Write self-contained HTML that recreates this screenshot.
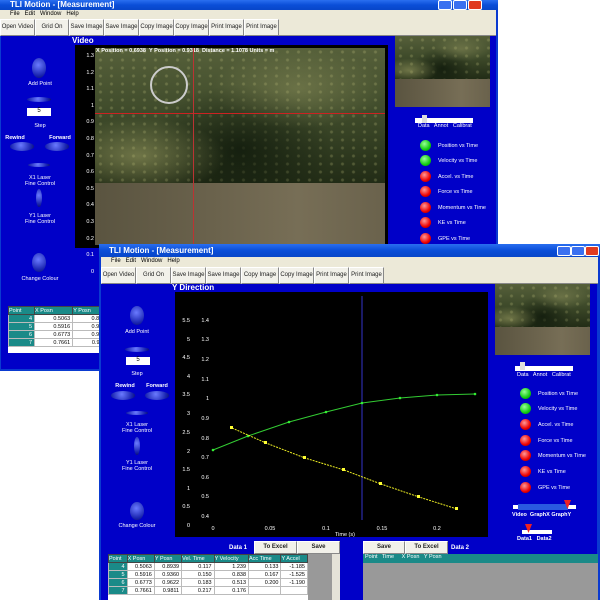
<!DOCTYPE html>
<html><head><style>
*{margin:0;padding:0;box-sizing:border-box}
body{width:600px;height:600px;background:#fff;position:relative;overflow:hidden;font-family:"Liberation Sans",sans-serif;font-size:6px}
.a{position:absolute}
.tb{background:linear-gradient(#2a6ff0,#0a4ed8 50%,#0846c8);color:#fff;font-weight:bold;font-size:8px;padding-left:10px;line-height:11px}
.menu{background:#ece9d8;font-size:6px;line-height:8px;padding-left:10px}
.tool{background:#ece9d8;border-bottom:1px solid #888}
.btn{position:absolute;top:1px;height:17px;border:1px solid #888;border-top-color:#fff;border-left-color:#fff;background:#f2f1ea;font-size:6px;text-align:center;line-height:15px;color:#222}
.blue{background:#0000c8}
.w{color:#fff;text-align:center;font-size:5.5px}
.ov{position:absolute;border-radius:50%;background:radial-gradient(circle at 45% 35%,#6a7aff,#1a25b0 70%,#0a1070);}
.ball{position:absolute;width:11px;height:11px;border-radius:50%}
.g{background:radial-gradient(circle at 40% 35%,#9f9,#1c1 60%,#070)}
.r{background:radial-gradient(circle at 40% 35%,#f99,#e00 60%,#700)}
.lbl{position:absolute;color:#fff;font-size:5.5px}
.fol{background:
 radial-gradient(ellipse at 15% 80%,rgba(190,190,120,.45),transparent 25%),
 radial-gradient(ellipse at 70% 30%,rgba(170,170,110,.35),transparent 30%),
 radial-gradient(ellipse at 50% 75%,rgba(10,20,8,.7),transparent 45%),
 radial-gradient(circle,rgba(200,200,130,.25) 1px,transparent 2px) 0 0/11px 8px,
 linear-gradient(#56603a,#3e4a2a 50%,#222c16)}
.wat{background:linear-gradient(90deg,#5a5440,#6a624c 40%,#776e56 70%,#6a624c)}
.wb{position:absolute;width:14px;height:10px;border:1px solid #fff;border-radius:2px;background:#3a70f0}
table{border-collapse:collapse;font-size:5.5px}
td{border:1px solid #bbb;height:8px;text-align:right;padding-right:2px;background:#fff}
th{background:#1a8a88;color:#fff;font-weight:normal;border:1px solid #444;height:8px;text-align:left}
td.h{background:#1a8a88;color:#fff}
</style></head><body>

<!-- BACK WINDOW -->
<div class="a" style="left:0;top:0;width:498px;height:371px;background:#0a3ad0"></div>
<div class="a tb" style="left:0;top:0;width:498px;height:10px;line-height:10px">TLI Motion - [Measurement]</div>
<div class="a wb" style="left:468px;top:0;background:#e03a20"></div>
<div class="a wb" style="left:453px;top:0"></div><div class="a wb" style="left:438px;top:0"></div>
<div class="a menu" style="left:0;top:10px;width:496px;height:8px">File &nbsp; Edit &nbsp; Window &nbsp; Help</div>
<div class="a tool" style="left:0;top:18px;width:496px;height:18px">
<div class="btn" style="left:0;width:35px">Open Video</div><div class="btn" style="left:35px;width:34px">Grid On</div>
<div class="btn" style="left:69px;width:35px">Save Image</div><div class="btn" style="left:104px;width:35px">Save Image</div>
<div class="btn" style="left:139px;width:35px">Copy Image</div><div class="btn" style="left:174px;width:35px">Copy Image</div>
<div class="btn" style="left:209px;width:35px">Print Image</div><div class="btn" style="left:244px;width:35px">Print Image</div>
</div>
<div class="a blue" style="left:1px;top:36px;width:495px;height:333px"></div>
<div class="a" style="left:72px;top:36px;color:#fff;font-weight:bold;font-size:8px">Video</div>
<div class="a" style="left:75px;top:45px;width:313px;height:203px;background:#000"></div>
<div class="a fol" style="left:95px;top:48px;width:290px;height:135px"></div>
<div class="a wat" style="left:95px;top:183px;width:290px;height:62px"></div>
<div class="a" style="left:96px;top:48px;color:#fff;font-size:5.5px;font-weight:bold">X Position = 0.6938 &nbsp;Y Position = 0.9318 &nbsp;Distance = 1.1078 Units = m</div>
<div class="a" style="left:95px;top:113px;width:290px;height:1px;background:#c22"></div>
<div class="a" style="left:193px;top:48px;width:1px;height:197px;background:#b33"></div>
<div class="a" style="left:150px;top:66px;width:38px;height:38px;border:2px solid #ccc;border-radius:50%"></div>
<div class="a" style="left:80px;top:48px;color:#fff;font-size:5.5px;line-height:16.6px;width:14px;text-align:right">1.3<br>1.2<br>1.1<br>1<br>0.9<br>0.8<br>0.7<br>0.6<br>0.5<br>0.4<br>0.3<br>0.2<br>0.1<br>0</div>
<!-- back left controls -->
<div class="ov" style="left:32px;top:58px;width:14px;height:20px"></div>
<div class="a w" style="left:15px;top:81px;width:50px">Add Point</div>
<div class="ov" style="left:27px;top:97px;width:24px;height:5px"></div>
<div class="a" style="left:27px;top:108px;width:24px;height:8px;background:#fff;font-size:6px;text-align:center">5</div>
<div class="a w" style="left:15px;top:123px;width:50px">Step</div>
<div class="a w" style="left:0;top:135px;width:30px;font-weight:bold">Rewind</div><div class="a w" style="left:45px;top:135px;width:30px;font-weight:bold">Forward</div>
<div class="ov" style="left:10px;top:142px;width:24px;height:9px"></div><div class="ov" style="left:45px;top:142px;width:24px;height:9px"></div>
<div class="ov" style="left:28px;top:163px;width:22px;height:4px"></div>
<div class="a w" style="left:15px;top:175px;width:50px">X1 Laser<br>Fine Control</div>
<div class="ov" style="left:36px;top:189px;width:6px;height:18px"></div>
<div class="a w" style="left:15px;top:213px;width:50px">Y1 Laser<br>Fine Control</div>
<div class="ov" style="left:32px;top:253px;width:14px;height:19px"></div>
<div class="a w" style="left:10px;top:276px;width:60px">Change Colour</div>
<div class="a" style="left:8px;top:306px;width:92px;height:47px;background:#fff;overflow:hidden">
<table style="width:120px"><tr><th>Point</th><th>X Posn</th><th>Y Posn</th><th>Vel</th></tr>
<tr><td class="h">4</td><td>0.5063</td><td>0.8939</td><td></td></tr><tr><td class="h">5</td><td>0.5916</td><td>0.9360</td><td></td></tr>
<tr><td class="h">6</td><td>0.6773</td><td>0.9622</td><td></td></tr><tr><td class="h">7</td><td>0.7661</td><td>0.9811</td><td></td></tr></table></div>
<!-- back right -->
<div class="a fol" style="left:395px;top:36px;width:95px;height:43px"></div>
<div class="a wat" style="left:395px;top:79px;width:95px;height:28px"></div>
<div class="a" style="left:415px;top:118px;width:58px;height:5px;background:#fff"></div>
<div class="a" style="left:422px;top:115px;width:5px;height:8px;background:#ddd"></div>
<div class="lbl" style="left:418px;top:123px">Data &nbsp; Annot &nbsp; Calibrat</div>
<div class="ball g" style="left:420px;top:140px"></div><div class="lbl" style="left:438px;top:143px">Position vs Time</div>
<div class="ball g" style="left:420px;top:155px"></div><div class="lbl" style="left:438px;top:158px">Velocity vs Time</div>
<div class="ball r" style="left:420px;top:171px"></div><div class="lbl" style="left:438px;top:174px">Accel. vs Time</div>
<div class="ball r" style="left:420px;top:186px"></div><div class="lbl" style="left:438px;top:189px">Force vs Time</div>
<div class="ball r" style="left:420px;top:202px"></div><div class="lbl" style="left:438px;top:205px">Momentum vs Time</div>
<div class="ball r" style="left:420px;top:217px"></div><div class="lbl" style="left:438px;top:220px">KE vs Time</div>
<div class="ball r" style="left:420px;top:233px"></div><div class="lbl" style="left:438px;top:236px">GPE vs Time</div>

<!-- FRONT WINDOW -->
<div class="a" style="left:99px;top:244px;width:501px;height:356px;background:#0a3ad0"></div>
<div class="a tb" style="left:99px;top:244px;width:501px;height:13px;line-height:13px">TLI Motion - [Measurement]</div>
<div class="a wb" style="left:585px;top:246px;background:#e03a20"></div>
<div class="a wb" style="left:571px;top:246px"></div><div class="a wb" style="left:557px;top:246px"></div>
<div class="a menu" style="left:101px;top:257px;width:497px;height:9px">File &nbsp; Edit &nbsp; Window &nbsp; Help</div>
<div class="a tool" style="left:101px;top:266px;width:497px;height:18px">
<div class="btn" style="left:0;width:35px">Open Video</div><div class="btn" style="left:35px;width:35px">Grid On</div>
<div class="btn" style="left:70px;width:35px">Save Image</div><div class="btn" style="left:105px;width:35px">Save Image</div>
<div class="btn" style="left:140px;width:38px">Copy Image</div><div class="btn" style="left:178px;width:35px">Copy Image</div>
<div class="btn" style="left:213px;width:35px">Print Image</div><div class="btn" style="left:248px;width:35px">Print Image</div>
</div>
<div class="a blue" style="left:101px;top:284px;width:496px;height:316px"></div>
<div class="a" style="left:172px;top:283px;color:#fff;font-weight:bold;font-size:8px">Y Direction</div>
<svg class="a" style="left:175px;top:292px" width="313" height="245" viewBox="175 292 313 245">
<rect x="175" y="292" width="313" height="245" fill="#000"/>
<line x1="362" y1="296" x2="362" y2="520" stroke="#33c" stroke-width="1"/>
<polyline points="213,450 248,436 289,422 326,412 362,403 400,398 437,395 475,394" fill="none" stroke="#3c3" stroke-width="1"/>
<g fill="#3e3"><circle cx="213" cy="450" r="1.3"/><circle cx="248" cy="436" r="1.3"/><circle cx="289" cy="422" r="1.3"/><circle cx="326" cy="412" r="1.3"/><circle cx="362" cy="403" r="1.3"/><circle cx="400" cy="398" r="1.3"/><circle cx="437" cy="395" r="1.3"/><circle cx="475" cy="394" r="1.3"/></g>
<polyline points="232,428 266,443 305,458 344,470 381,484 419,497 457,509" fill="none" stroke="#ee2" stroke-width="1" stroke-dasharray="2,1"/>
<g fill="#ff3"><rect x="230" y="426" width="3" height="3"/><rect x="264" y="441" width="3" height="3"/><rect x="303" y="456" width="3" height="3"/><rect x="342" y="468" width="3" height="3"/><rect x="379" y="482" width="3" height="3"/><rect x="417" y="495" width="3" height="3"/><rect x="455" y="507" width="3" height="3"/></g>
<g fill="#fff" font-size="5.5" font-family="Liberation Sans" text-anchor="end">
<text x="190" y="322">5.5</text><text x="190" y="341">5</text><text x="190" y="359">4.5</text><text x="190" y="378">4</text><text x="190" y="396">3.5</text><text x="190" y="415">3</text><text x="190" y="434">2.5</text><text x="190" y="453">2</text><text x="190" y="471">1.5</text><text x="190" y="490">1</text><text x="190" y="508">0.5</text><text x="190" y="527">0</text>
<text x="209" y="322">1.4</text><text x="209" y="341">1.3</text><text x="209" y="361">1.2</text><text x="209" y="381">1.1</text><text x="209" y="400">1</text><text x="209" y="420">0.9</text><text x="209" y="440">0.8</text><text x="209" y="459">0.7</text><text x="209" y="479">0.6</text><text x="209" y="498">0.5</text><text x="209" y="518">0.4</text>
</g>
<g fill="#fff" font-size="5.5" font-family="Liberation Sans" text-anchor="middle">
<text x="213" y="530">0</text><text x="270" y="530">0.05</text><text x="326" y="530">0.1</text><text x="382" y="530">0.15</text><text x="437" y="530">0.2</text><text x="345" y="536">Time (s)</text></g>
</svg>
<!-- front left controls -->
<div class="ov" style="left:130px;top:306px;width:14px;height:19px"></div>
<div class="a w" style="left:112px;top:329px;width:50px">Add Point</div>
<div class="ov" style="left:125px;top:347px;width:24px;height:5px"></div>
<div class="a" style="left:126px;top:357px;width:24px;height:8px;background:#fff;font-size:6px;text-align:center">5</div>
<div class="a w" style="left:112px;top:371px;width:50px">Step</div>
<div class="a w" style="left:110px;top:383px;width:30px;font-weight:bold">Rewind</div><div class="a w" style="left:142px;top:383px;width:30px;font-weight:bold">Forward</div>
<div class="ov" style="left:111px;top:391px;width:24px;height:9px"></div><div class="ov" style="left:145px;top:391px;width:24px;height:9px"></div>
<div class="ov" style="left:126px;top:411px;width:22px;height:4px"></div>
<div class="a w" style="left:112px;top:422px;width:50px">X1 Laser<br>Fine Control</div>
<div class="ov" style="left:134px;top:437px;width:6px;height:18px"></div>
<div class="a w" style="left:112px;top:460px;width:50px">Y1 Laser<br>Fine Control</div>
<div class="ov" style="left:130px;top:502px;width:14px;height:18px"></div>
<div class="a w" style="left:107px;top:523px;width:60px">Change Colour</div>
<!-- front bottom -->
<div class="a" style="left:229px;top:545px;color:#fff;font-weight:bold;font-size:6px">Data 1</div>
<div class="btn" style="left:254px;top:541px;width:43px;height:13px;line-height:11px;font-weight:bold">To Excel</div>
<div class="btn" style="left:297px;top:541px;width:43px;height:13px;line-height:11px;font-weight:bold">Save</div>
<div class="a" style="left:108px;top:554px;width:232px;height:46px;background:#fff;overflow:hidden">
<table style="width:200px"><tr><th>Point</th><th>X Posn</th><th>Y Posn</th><th>Vel. Time</th><th>Y Velocity</th><th>Acc Time</th><th>Y Accel</th></tr>
<tr><td class="h">4</td><td>0.5063</td><td>0.8939</td><td>0.117</td><td>1.239</td><td>0.133</td><td>-1.185</td></tr>
<tr><td class="h">5</td><td>0.5916</td><td>0.9360</td><td>0.150</td><td>0.838</td><td>0.167</td><td>-1.525</td></tr>
<tr><td class="h">6</td><td>0.6773</td><td>0.9622</td><td>0.183</td><td>0.513</td><td>0.200</td><td>-1.190</td></tr>
<tr><td class="h">7</td><td>0.7661</td><td>0.9811</td><td>0.217</td><td>0.176</td><td></td><td></td></tr></table>
<div class="a" style="left:200px;top:0;width:24px;height:46px;background:#999"></div>
<div class="a" style="left:224px;top:0;width:8px;height:46px;background:#e4e2d8"></div></div>
<div class="btn" style="left:363px;top:541px;width:42px;height:13px;line-height:11px;font-weight:bold">Save</div>
<div class="btn" style="left:405px;top:541px;width:43px;height:13px;line-height:11px;font-weight:bold">To Excel</div>
<div class="a" style="left:451px;top:545px;color:#fff;font-weight:bold;font-size:6px">Data 2</div>
<div class="a" style="left:363px;top:554px;width:235px;height:46px;background:#999"></div>
<div class="a" style="left:363px;top:554px;width:235px;height:9px;background:#1a8a88;color:#fff;font-size:5.5px;padding-left:2px">Point &nbsp; Time &nbsp; &nbsp; X Posn &nbsp; Y Posn</div>
<!-- front right -->
<div class="a fol" style="left:495px;top:284px;width:95px;height:43px"></div>
<div class="a wat" style="left:495px;top:327px;width:95px;height:28px"></div>
<div class="a" style="left:515px;top:366px;width:58px;height:5px;background:#fff"></div>
<div class="a" style="left:520px;top:362px;width:5px;height:8px;background:#ddd"></div>
<div class="lbl" style="left:517px;top:372px">Data &nbsp; Annot &nbsp; Calibrat</div>
<div class="ball g" style="left:520px;top:388px"></div><div class="lbl" style="left:538px;top:391px">Position vs Time</div>
<div class="ball g" style="left:520px;top:403px"></div><div class="lbl" style="left:538px;top:406px">Velocity vs Time</div>
<div class="ball r" style="left:520px;top:419px"></div><div class="lbl" style="left:538px;top:422px">Accel. vs Time</div>
<div class="ball r" style="left:520px;top:435px"></div><div class="lbl" style="left:538px;top:438px">Force vs Time</div>
<div class="ball r" style="left:520px;top:450px"></div><div class="lbl" style="left:538px;top:453px">Momentum vs Time</div>
<div class="ball r" style="left:520px;top:466px"></div><div class="lbl" style="left:538px;top:469px">KE vs Time</div>
<div class="ball r" style="left:520px;top:482px"></div><div class="lbl" style="left:538px;top:485px">GPE vs Time</div>
<div class="a" style="left:513px;top:505px;width:63px;height:4px;background:#fff"></div>
<div class="a" style="left:518px;top:504px;width:50px;height:6px;background:#2a5ae0"></div>
<div class="a" style="left:564px;top:500px;width:7px;height:9px;background:#e22;clip-path:polygon(0 0,100% 0,50% 100%)"></div>
<div class="lbl" style="left:512px;top:512px;font-weight:bold">Video &nbsp;GraphX GraphY</div>
<div class="a" style="left:522px;top:530px;width:30px;height:4px;background:#fff"></div>
<div class="a" style="left:525px;top:524px;width:7px;height:9px;background:#e22;clip-path:polygon(0 0,100% 0,50% 100%)"></div>
<div class="lbl" style="left:517px;top:536px;font-weight:bold">Data1 &nbsp; Data2</div>
</body></html>
